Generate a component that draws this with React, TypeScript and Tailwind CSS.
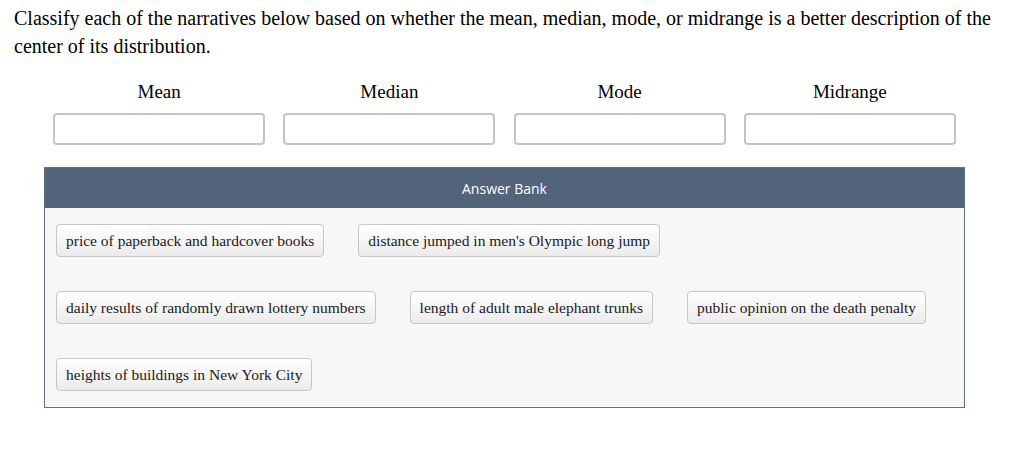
const columns = ['Mean', 'Median', 'Mode', 'Midrange'];

const rows = [
  ['price of paperback and hardcover books', "distance jumped in men's Olympic long jump"],
  [
    'daily results of randomly drawn lottery numbers',
    'length of adult male elephant trunks',
    'public opinion on the death penalty',
  ],
  ['heights of buildings in New York City'],
];

function Chip({ label }: { label: string }) {
  return (
    <div className="h-[33px] px-[9px] flex items-center rounded-[4px] border border-[#c6c6c6] bg-gradient-to-b from-white to-[#ebebeb] text-[15.5px] text-[#1a1a1a] whitespace-nowrap">
      {label}
    </div>
  );
}

export default function App() {
  return (
    <div
      className="w-[1024px] h-[453px] bg-white text-black"
      style={{ fontFamily: '"Liberation Serif", "Times New Roman", serif' }}
    >
      <p className="pl-[14px] pr-[20px] pt-[4px] text-[20px] leading-[28px]">
        Classify each of the narratives below based on whether the mean, median, mode, or midrange is a better
        description of the center of its distribution.
      </p>

      {/* Target columns */}
      <div className="ml-[44px] mt-[18px] w-[921px] grid grid-cols-4">
        {columns.map((c) => (
          <div key={c} className="flex flex-col items-center">
            <div className="text-[19px] leading-[28px]">{c}</div>
            <div className="mt-[7px] w-[212px] h-[32px] rounded-[4px] border-2 border-[#c4c4c4] bg-white" />
          </div>
        ))}
      </div>

      {/* Answer bank */}
      <div className="ml-[44px] mt-[22px] w-[921px] border border-[#5e7088] bg-[#f7f7f7]">
        <div
          className="h-[40px] bg-[#51647a] flex items-center justify-center text-white text-[14px]"
          style={{ fontFamily: '"Open Sans", "DejaVu Sans", sans-serif' }}
        >
          Answer Bank
        </div>
        <div className="pl-[11px] pt-[16px] pb-[16px] flex flex-col gap-[34px]">
          {rows.map((r, i) => (
            <div key={i} className="flex gap-[34px]">
              {r.map((t) => (
                <Chip key={t} label={t} />
              ))}
            </div>
          ))}
        </div>
      </div>
    </div>
  );
}
